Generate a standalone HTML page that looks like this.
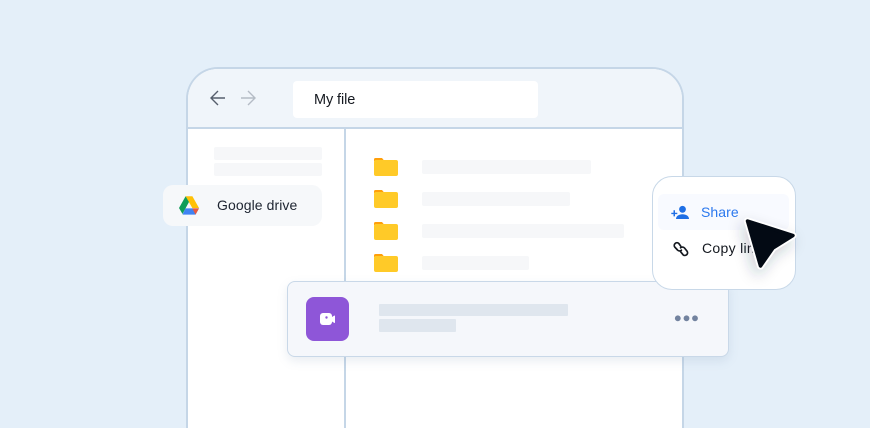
<!DOCTYPE html>
<html><head><meta charset="utf-8">
<style>
html,body{margin:0;padding:0;width:870px;height:428px;overflow:hidden}
body{position:relative;background:#e4eff9;font-family:"Liberation Sans",sans-serif;color:#14181f}
div,svg{position:absolute;box-sizing:border-box}
#r{left:0;top:0;width:870px;height:428px;overflow:hidden}
.w{left:186px;top:67px;width:498px;height:361px;background:#fff;border:2px solid #c5d6e7;border-bottom:0;border-radius:32px 32px 0 0;overflow:hidden}
.b{background:#f6f7f9;border-radius:2px}
.t{white-space:nowrap;font-size:14px;line-height:18px;letter-spacing:.08px}
</style></head><body>
<div id="r">
<div class="w">
<div style="left:0;top:0;width:494px;height:59px;background:#f0f5fa"></div>
<div style="left:0;top:58px;width:494px;height:2px;background:#c5d6e7"></div>
<div style="left:156px;top:60px;width:2px;height:301px;background:#c5d6e7"></div>
</div>
<svg style="left:208px;top:88px" width="50" height="20" viewBox="0 0 50 20" fill="none" stroke-width="1.4"><path d="M17 10H3M10 3 3 10l7 7" stroke="#555e6c"/><path d="M33 10h14M40 3l7 7-7 7" stroke="#b4bcc5"/></svg>
<div style="left:293px;top:81px;width:245px;height:37px;background:#fff;border-radius:4px"></div>
<div class="t" style="left:314px;top:91px;font-size:14.500px;letter-spacing:-.1px">My file</div>
<div class="b" style="left:214px;top:147px;width:108px;height:13px"></div>
<div class="b" style="left:214px;top:163px;width:108px;height:13px"></div>
<div style="left:163px;top:185px;width:159px;height:41px;background:#f6f8fa;border-radius:10px"></div>
<svg style="left:179px;top:196px" width="20" height="19" viewBox="0 0 20 19">
<path d="M6.600 .3h6.800L20 12h-6.700z" fill="#ffc107"/>
<path d="M6.600 .3 10 6 3.500 18 0 12z" fill="#0f9d58"/>
<path d="M6.500 12.400H20l-3.500 6.200h-13z" fill="#3f83f3"/>
<path d="M13.300 12.400H20l-3.500 6.200z" fill="#ea5a3f"/>
<path d="M10 6.500 12.900 11.800H7.100z" fill="#f6f8fa"/>
</svg>
<div class="t" style="left:217px;top:196px;color:#1d2430">Google drive</div>
<svg style="left:374px;top:157px" width="25" height="115" viewBox="0 0 25 115">
<g><path d="M0 4V2.500A1.500 1.500 0 0 1 1.500 1H8l2.500 3z" fill="#ff9f0a"/><rect y="3" width="24" height="16" rx="2" fill="#ffca28"/></g>
<g transform="translate(0 32)"><path d="M0 4V2.500A1.500 1.500 0 0 1 1.500 1H8l2.500 3z" fill="#ff9f0a"/><rect y="3" width="24" height="16" rx="2" fill="#ffca28"/></g>
<g transform="translate(0 64)"><path d="M0 4V2.500A1.500 1.500 0 0 1 1.500 1H8l2.500 3z" fill="#ff9f0a"/><rect y="3" width="24" height="16" rx="2" fill="#ffca28"/></g>
<g transform="translate(0 96)"><path d="M0 4V2.500A1.500 1.500 0 0 1 1.500 1H8l2.500 3z" fill="#ff9f0a"/><rect y="3" width="24" height="16" rx="2" fill="#ffca28"/></g>
</svg>
<div class="b" style="left:422px;top:160px;width:169px;height:14px"></div>
<div class="b" style="left:422px;top:192px;width:148px;height:14px"></div>
<div class="b" style="left:422px;top:224px;width:202px;height:14px"></div>
<div class="b" style="left:422px;top:256px;width:107px;height:14px"></div>
<div style="left:287px;top:281px;width:442px;height:76px;background:#f5f7fb;border:1px solid #c9d8e8;border-radius:8px;box-shadow:0 4px 10px rgba(120,145,175,.16)"></div>
<div style="left:306px;top:297px;width:43px;height:44px;background:#8e56d8;border-radius:8px"></div>
<svg style="left:319px;top:312px" width="17" height="14" viewBox="0 0 17 14"><rect x="1" y="1" width="12" height="12" rx="3" fill="#fff"/><path d="M13 5.500 15.500 4v6.500L13 9z" fill="#fff" stroke="#fff" stroke-linejoin="round"/><circle cx="7.500" cy="5.500" r="1.200" fill="#8e56d8"/></svg>
<div style="left:379px;top:304px;width:189px;height:12px;background:#dfe6ee;border-radius:1px"></div>
<div style="left:379px;top:319px;width:77px;height:13px;background:#dfe6ee;border-radius:1px"></div>
<svg style="left:672px;top:312px" width="28" height="12"><g fill="#73839f"><circle cx="5.800" cy="6.300" r="2.900"/><circle cx="14.500" cy="6.300" r="2.900"/><circle cx="23" cy="6.300" r="2.900"/></g></svg>
<div style="left:652px;top:176px;width:144px;height:114px;background:#fff;border:1px solid #c8d8e8;border-radius:20px"></div>
<div style="left:658px;top:194px;width:131px;height:36px;background:#f8faff;border-radius:6px"></div>
<svg style="left:671px;top:205px" width="20" height="15" viewBox="0 0 20 15"><g fill="#1f6fe5"><circle cx="11.500" cy="4.300" r="3.400"/><path d="M5 14c0-3 3-4.700 6.500-4.700S18 11 18 14z"/><path d="M2.500 5.300h1.500v2.400h2.300v1.400H4v2.300H2.500V9.100H.3V7.700h2.200z"/></g></svg>
<div class="t" style="left:701px;top:203px;color:#2b78ee">Share</div>
<svg style="left:672px;top:240px" width="18" height="18" viewBox="0 0 18 18" fill="none" stroke="#14181f" stroke-width="1.700" stroke-linecap="round"><path d="M8.800 6.200 6.800 3.500a2.700 2.700 0 0 0-4 3.600L5.500 10a2.700 2.700 0 0 0 3.900 .2"/><path d="M8.700 11.800 11 14.700a2.700 2.700 0 0 0 4-3.600L12.500 8a2.700 2.700 0 0 0-3.900-.2"/></svg>
<div class="t" style="left:702px;top:239px;letter-spacing:.3px">Copy link</div>
<svg style="left:730px;top:205px;overflow:visible" width="80" height="80" viewBox="0 0 80 80">
<defs><filter id="s" x="-50%" y="-50%" width="200%" height="200%"><feDropShadow dx="-3" dy="6" stdDeviation="7" flood-color="#24344a" flood-opacity=".22"/></filter></defs>
<path d="M17.500 16 63 30.500 43 43 30.500 61z" fill="#fff" stroke="#fff" stroke-width="7" stroke-linejoin="round" filter="url(#s)"/>
<path d="M17.500 16 63 30.500 43 43 30.500 61z" fill="#030a14" stroke="#030a14" stroke-width="3.500" stroke-linejoin="round"/>
</svg>
</div>
</body></html>
